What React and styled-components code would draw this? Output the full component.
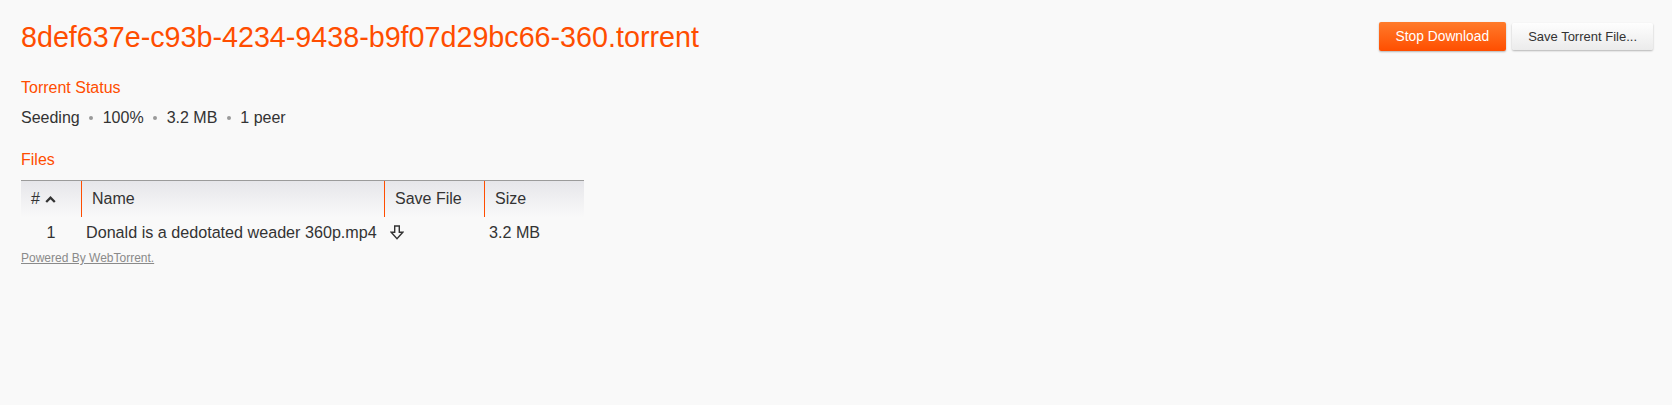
import React from "react";
import styled, { createGlobalStyle } from "styled-components";

const Global = createGlobalStyle`
  html, body {
    margin: 0;
    padding: 0;
    background: #f9f9f9;
  }
  body {
    font-family: "Liberation Sans", Arial, Helvetica, sans-serif;
    color: #333;
  }
`;

const Page = styled.div`
  padding: 21px 19px 20px 21px;
  min-height: 405px;
  box-sizing: border-box;
  background: #f9f9f9;
`;

const TopBar = styled.div`
  display: flex;
  justify-content: space-between;
  align-items: flex-start;
`;

const Title = styled.h1`
  margin: 0;
  font-size: 28.7px;
  line-height: 32px;
  font-weight: 400;
  color: #ff4d00;
`;

const Actions = styled.div`
  display: flex;
  gap: 6px;
  margin-top: 1px;
`;

const Button = styled.button`
  padding: 0 ${(p) => (p.$primary ? "17px" : "16px")};
  border: none;
  border-radius: 2px;
  font-family: "Liberation Sans", Arial, sans-serif;
  font-size: ${(p) => (p.$primary ? "13.8px" : "13px")};
  cursor: pointer;
  color: ${(p) => (p.$primary ? "#fff" : "#333")};
  background: ${(p) =>
    p.$primary
      ? "linear-gradient(to bottom, #ff7b2b 0%, #ff4e00 100%)"
      : "linear-gradient(to bottom, #fefefe 0%, #ebebeb 100%)"};
  box-shadow: 0 1px 2px rgba(0, 0, 0, 0.28);
  margin-top: ${(p) => (p.$primary ? "0" : "1px")};
  height: ${(p) => (p.$primary ? "29px" : "27px")};
`;

const SectionTitle = styled.h2`
  margin: ${(p) => p.$gap || "26px"} 0 0;
  font-size: 16px;
  line-height: 18px;
  font-weight: 400;
  color: #ff4d00;
`;

const StatusLine = styled.div`
  margin-top: 11px;
  font-size: 16px;
  line-height: 20px;
  display: flex;
  align-items: center;
`;

const Dot = styled.span`
  display: inline-block;
  width: 4px;
  height: 4px;
  border-radius: 50%;
  background: #9a9a9a;
  margin: 0 9.5px;
`;

const Table = styled.div`
  margin-top: 11px;
  width: 563px;
  border-top: 1px solid #9b9b9b;
`;

const cols = "60px 303px 100px 100px";

const HeadRow = styled.div`
  display: grid;
  grid-template-columns: ${cols};
  height: 36px;
  background: linear-gradient(to bottom, #e6e6ea 0%, #f9f9f9 100%);
`;

const HeadCell = styled.div`
  display: flex;
  align-items: center;
  padding-left: 10px;
  font-size: 16px;
  color: #333;
  border-left: ${(p) => (p.$first ? "none" : "1px solid #ff4d00")};
`;

const Row = styled.div`
  display: grid;
  grid-template-columns: ${cols};
  height: 30px;
`;

const Cell = styled.div`
  display: flex;
  align-items: center;
  justify-content: ${(p) => (p.$center ? "center" : "flex-start")};
  padding-left: ${(p) => (p.$center ? "0" : "5px")};
  font-size: 16.15px;
  color: #333;
  white-space: nowrap;
`;

const Chevron = styled.svg`
  margin-left: 5px;
  margin-top: 1px;
`;

const SaveIcon = styled.svg`
  margin-left: 1px;
  margin-top: 1px;
`;

const Footer = styled.a`
  display: inline-block;
  margin-top: 4px;
  font-size: 12px;
  line-height: 14px;
  color: #8a8a8a;
  text-decoration: underline;
`;

export default function App() {
  return (
    <>
      <Global />
      <Page>
        <TopBar>
          <Title>8def637e-c93b-4234-9438-b9f07d29bc66-360.torrent</Title>
          <Actions>
            <Button $primary>Stop Download</Button>
            <Button>Save Torrent File...</Button>
          </Actions>
        </TopBar>

        <SectionTitle>Torrent Status</SectionTitle>
        <StatusLine>
          <span>Seeding</span>
          <Dot />
          <span>100%</span>
          <Dot />
          <span>3.2 MB</span>
          <Dot />
          <span>1 peer</span>
        </StatusLine>

        <SectionTitle $gap="23px">Files</SectionTitle>
        <Table>
          <HeadRow>
            <HeadCell $first>
              #
              <Chevron width="11" height="7" viewBox="0 0 11 7">
                <polyline
                  points="1.2,6 5.5,1.7 9.8,6"
                  fill="none"
                  stroke="#333"
                  strokeWidth="2.3"
                />
              </Chevron>
            </HeadCell>
            <HeadCell>Name</HeadCell>
            <HeadCell>Save File</HeadCell>
            <HeadCell>Size</HeadCell>
          </HeadRow>
          <Row>
            <Cell $center>1</Cell>
            <Cell>Donald is a dedotated weader 360p.mp4</Cell>
            <Cell>
              <SaveIcon width="14" height="15" viewBox="0 0 14 15">
                <path
                  d="M4.7 1 H9.3 V7.3 H12.8 L7 13.8 L1.2 7.3 H4.7 Z"
                  fill="none"
                  stroke="#333"
                  strokeWidth="1.4"
                  strokeLinejoin="miter"
                />
              </SaveIcon>
            </Cell>
            <Cell>3.2 MB</Cell>
          </Row>
        </Table>
        <Footer href="#">Powered By WebTorrent.</Footer>
      </Page>
    </>
  );
}
